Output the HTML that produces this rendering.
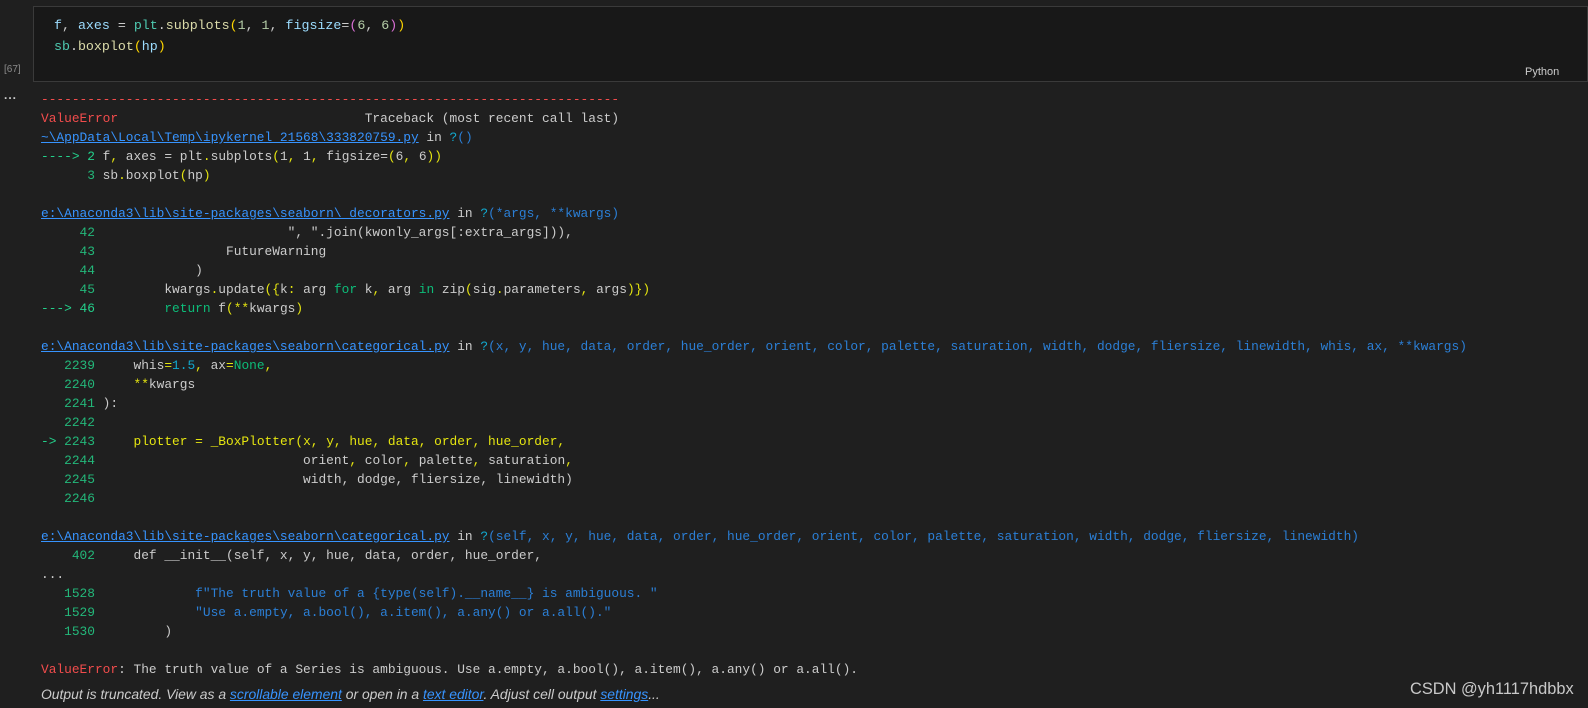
<!DOCTYPE html>
<html><head><meta charset="utf-8"><style>
html,body{margin:0;padding:0;background:#1f1f1f;width:1588px;height:708px;overflow:hidden;position:relative}
.cell{position:absolute;left:33px;top:6px;width:1553px;height:74px;background:#181818;border:1px solid #3a3a3a}
.code{position:absolute;left:54px;top:15px;margin:0;font:13.3px/21px "Liberation Mono",monospace;color:#cccccc;white-space:pre}
.ex{position:absolute;left:4px;top:64px;font:10px "Liberation Sans",sans-serif;color:#8b8b8b}
.dots{position:absolute;left:4px;top:88px;font:bold 12px "Liberation Sans",sans-serif;color:#cccccc;letter-spacing:1px}
.py{position:absolute;left:1525px;top:66px;font:11px "Liberation Sans",sans-serif;color:#cccccc}
pre.tb{position:absolute;left:41px;top:90px;margin:0;font:12.85px/19px "Liberation Mono",monospace;color:#cccccc;white-space:pre}
.r{color:#f14c4c}.g{color:#23d18b}.n{color:#23b87a}.y{color:#e5e510}.b{color:#2b7fd6}.c{color:#11a8cd}.k{color:#0dbc79}
.l{color:#3794ff;text-decoration:underline}
.lb{color:#9cdcfe}.tl{color:#4ec9b0}.fn{color:#dcdcaa}.num{color:#b5cea8}.p1{color:#ffd700}.p2{color:#da70d6}
.trunc{position:absolute;left:41px;top:686px;font:italic 13.9px "Liberation Sans",sans-serif;color:#cccccc}
.trunc a{color:#3794ff;text-decoration:underline}
.wm{position:absolute;left:1410px;top:680px;font:16.4px "Liberation Sans",sans-serif;color:#c8c8c8}
</style></head><body>
<div class="cell"></div>
<pre class="code"><span class="lb">f</span>, <span class="lb">axes</span> = <span class="tl">plt</span>.<span class="fn">subplots</span><span class="p1">(</span><span class="num">1</span>, <span class="num">1</span>, <span class="lb">figsize</span>=<span class="p2">(</span><span class="num">6</span>, <span class="num">6</span><span class="p2">)</span><span class="p1">)</span>
<span class="tl">sb</span>.<span class="fn">boxplot</span><span class="p1">(</span><span class="lb">hp</span><span class="p1">)</span></pre>
<div class="ex">[67]</div>
<div class="dots">...</div>
<div class="py">Python</div>
<pre class="tb"><span class="r">---------------------------------------------------------------------------</span>
<span class="r">ValueError</span>                                Traceback (most recent call last)
<span class="l">~\AppData\Local\Temp\ipykernel_21568\333820759.py</span> in <span class="c">?</span><span class="b">()</span>
<span class="g">----&gt; 2</span> f<span class="y">,</span> axes = plt<span class="y">.</span>subplots<span class="y">(</span>1<span class="y">,</span> 1<span class="y">,</span> figsize=<span class="y">(</span>6<span class="y">,</span> 6<span class="y">))</span>
<span class="n">      3</span> sb<span class="y">.</span>boxplot<span class="y">(</span>hp<span class="y">)</span>

<span class="l">e:\Anaconda3\lib\site-packages\seaborn\_decorators.py</span> in <span class="c">?</span><span class="b">(*args, **kwargs)</span>
<span class="n">     42</span>                         ", ".join(kwonly_args[:extra_args])),
<span class="n">     43</span>                 FutureWarning
<span class="n">     44</span>             )
<span class="n">     45</span>         kwargs<span class="y">.</span>update<span class="y">({</span>k<span class="y">:</span> arg <span class="k">for</span> k<span class="y">,</span> arg <span class="k">in</span> zip<span class="y">(</span>sig<span class="y">.</span>parameters<span class="y">,</span> args<span class="y">)})</span>
<span class="g">---&gt; 46</span>         <span class="k">return</span> f<span class="y">(**</span>kwargs<span class="y">)</span>

<span class="l">e:\Anaconda3\lib\site-packages\seaborn\categorical.py</span> in <span class="c">?</span><span class="b">(x, y, hue, data, order, hue_order, orient, color, palette, saturation, width, dodge, fliersize, linewidth, whis, ax, **kwargs)</span>
<span class="n">   2239</span>     whis<span class="y">=</span><span class="c">1.5</span><span class="y">,</span> ax<span class="y">=</span><span class="k">None</span><span class="y">,</span>
<span class="n">   2240</span>     <span class="y">**</span>kwargs
<span class="n">   2241</span> ):
<span class="n">   2242</span>
<span class="g">-&gt;</span><span class="n"> 2243</span>     <span class="y">plotter = _BoxPlotter(x, y, hue, data, order, hue_order,</span>
<span class="n">   2244</span>                           orient<span class="y">,</span> color<span class="y">,</span> palette<span class="y">,</span> saturation<span class="y">,</span>
<span class="n">   2245</span>                           width, dodge, fliersize, linewidth)
<span class="n">   2246</span>

<span class="l">e:\Anaconda3\lib\site-packages\seaborn\categorical.py</span> in <span class="c">?</span><span class="b">(self, x, y, hue, data, order, hue_order, orient, color, palette, saturation, width, dodge, fliersize, linewidth)</span>
<span class="n">    402</span>     def __init__(self, x, y, hue, data, order, hue_order,
...
<span class="n">   1528</span>             <span class="b">f"The truth value of a {type(self).__name__} is ambiguous. "</span>
<span class="n">   1529</span>             <span class="b">"Use a.empty, a.bool(), a.item(), a.any() or a.all()."</span>
<span class="n">   1530</span>         )

<span class="r">ValueError</span>: The truth value of a Series is ambiguous. Use a.empty, a.bool(), a.item(), a.any() or a.all().</pre>
<div class="trunc">Output is truncated. View as a <a>scrollable element</a> or open in a <a>text editor</a>. Adjust cell output <a>settings</a>...</div>
<div class="wm">CSDN @yh1117hdbbx</div>
</body></html>
